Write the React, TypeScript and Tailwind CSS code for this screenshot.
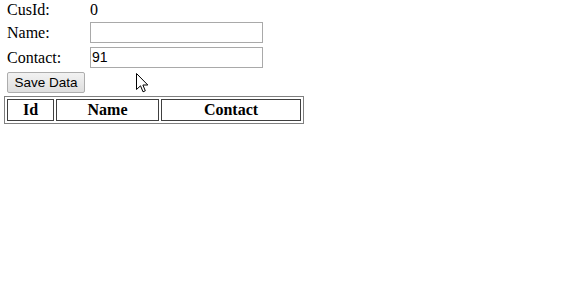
import React from "react";

function Cursor() {
  return (
    <svg
      className="absolute left-[136px] top-[73px]"
      width="13"
      height="20"
      viewBox="0 0 13 20"
    >
      <path
        d="M0.5 0.5 L0.5 16.5 L4.5 12.8 L7 18.8 L9.3 17.8 L6.9 12 L11.8 12 Z"
        fill="#fff"
        stroke="#000"
        strokeWidth="1"
        strokeLinejoin="miter"
      />
    </svg>
  );
}

export default function App() {
  return (
    <div className="relative h-[295px] w-[562px] overflow-hidden bg-white font-['Liberation_Serif',serif] text-[16px] text-black">
      <div className="flex flex-col">
        <div className="flex h-[19px] items-center pl-[7px]">
          <span className="w-[83px]">CusId:</span>
          <span>0</span>
        </div>
        <div className="mt-[3px] flex h-[21px] items-center pl-[7px]">
          <span className="w-[83px]">Name:</span>
          <input
            className="h-[21px] w-[173px] border border-[#a9a9a9] px-[1px] font-['Liberation_Sans',sans-serif] text-[14px] outline-none"
            defaultValue=""
          />
        </div>
        <div className="mt-[4px] flex h-[21px] items-center pl-[7px]">
          <span className="w-[83px]">Contact:</span>
          <input
            className="h-[21px] w-[173px] border border-[#a9a9a9] px-[1px] font-['Liberation_Sans',sans-serif] text-[14px] outline-none"
            defaultValue="91"
          />
        </div>
        <div className="mt-[4px] flex pl-[7px]">
          <button className="h-[21px] w-[78px] rounded-[2px] border border-[#adadad] bg-gradient-to-b from-[#f2f2f2] to-[#dedede] font-['Liberation_Sans',sans-serif] text-[13.5px] leading-none text-black">
            Save Data
          </button>
        </div>
        <div className="mt-[3px] flex pl-[4px]">
          <table className="border-separate border-spacing-[2px] border border-[#808080]">
            <thead>
              <tr>
                <th className="h-[22px] w-[47px] border border-[#404040] p-0 font-bold leading-none">Id</th>
                <th className="h-[22px] w-[103px] border border-[#404040] p-0 font-bold leading-none">Name</th>
                <th className="h-[22px] w-[140px] border border-[#404040] p-0 font-bold leading-none">Contact</th>
              </tr>
            </thead>
          </table>
        </div>
      </div>
      <Cursor />
    </div>
  );
}
